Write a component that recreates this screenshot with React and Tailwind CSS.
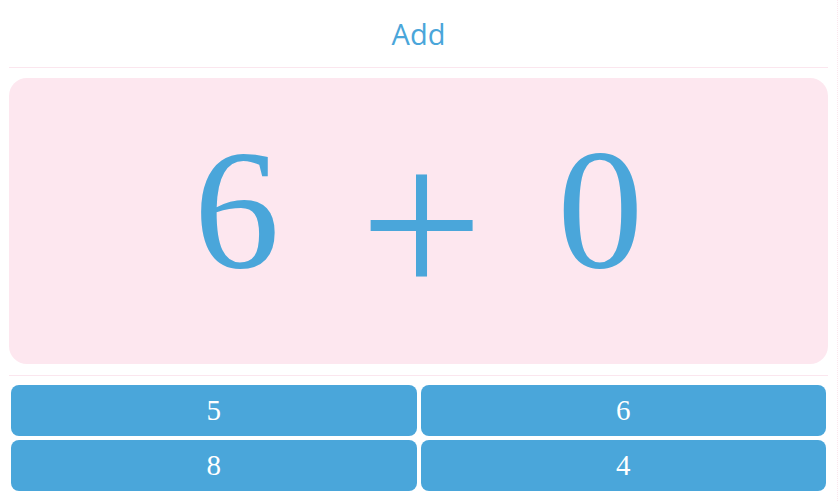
export default function App() {
  return (
    <div className="w-[838px] h-[501px] bg-white px-[9px] flex flex-col border-r border-dotted border-[#fbe6ee]">
      <div className="h-[68px] flex items-center justify-center border-b border-[#fbe6ee]">
        <span className="text-[29px] text-[#4aa6da] leading-none font-['Open_Sans',sans-serif] -mt-[1px]">Add</span>
      </div>
      <div className="mt-[10px] h-[286px] rounded-[18px] bg-[#fde7ef] flex items-center justify-center text-[#4aa6da] leading-none font-['Liberation_Serif','Times_New_Roman',serif]">
        <span className="text-[172px] mr-[80px] -mt-[24px]">6</span>
        <span className="text-[219px] mr-[74px] mt-[6px]">+</span>
        <span className="text-[172px] -mt-[24px]">0</span>
      </div>
      <div className="mt-[11px] border-t border-[#fbe6ee]" />
      <div className="mt-[9px] px-[2px] grid grid-cols-2 gap-x-[4px] gap-y-[4px] font-['Liberation_Serif','Times_New_Roman',serif]">
        {["5", "6", "8", "4"].map((n) => (
          <button key={n} className="h-[51px] rounded-[8px] bg-[#4aa6da] text-white text-[29px] leading-none flex items-center justify-center font-['Liberation_Serif','Times_New_Roman',serif]">
            {n}
          </button>
        ))}
      </div>
    </div>
  );
}
